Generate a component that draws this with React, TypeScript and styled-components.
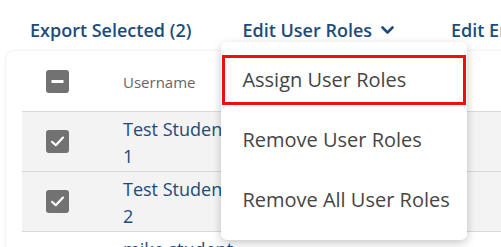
import React from "react";
import styled, { createGlobalStyle, css } from "styled-components";

const GlobalStyle = createGlobalStyle`
  body {
    margin: 0;
    background: #ffffff;
    font-family: "Open Sans", "Liberation Sans", sans-serif;
    overflow: hidden;
  }
`;

const Page = styled.div`
  padding: 18px 0 0 6px;
  width: 501px;
  height: 247px;
  box-sizing: border-box;
  overflow: hidden;
`;

const Toolbar = styled.div`
  display: flex;
  align-items: center;
  gap: 51px;
  padding-left: 24px;
  height: 24px;
  white-space: nowrap;
`;

const ToolButton = styled.div`
  position: relative;
  display: flex;
  align-items: center;
  font-size: 18px;
  font-weight: 600;
  line-height: 24px;
  color: #1d4c7c;

  svg {
    margin-left: 9px;
    margin-right: 6px;
  }
`;

const Menu = styled.div`
  position: absolute;
  top: 24px;
  left: -21px;
  width: 246px;
  padding: 8px 0 10px;
  background: #ffffff;
  border-radius: 6px;
  box-shadow: 0 3px 10px rgba(0, 0, 0, 0.22);
  z-index: 10;
`;

const MenuItem = styled.div<{ focused?: boolean }>`
  position: relative;
  height: 60px;
  display: flex;
  align-items: center;
  padding-left: 21px;
  font-size: 20px;
  font-weight: 400;
  color: #454545;

  ${({ focused }) =>
    focused &&
    css`
      &::after {
        content: "";
        position: absolute;
        inset: 5px 1px;
        border: 3px solid #f20d0d;
      }
    `}
`;

const Card = styled.div`
  margin-top: 9px;
  width: 540px;
  height: 220px;
  padding-left: 16px;
  background: #ffffff;
  border-radius: 8px;
  box-shadow: 0 0 3px rgba(0, 0, 0, 0.12);
`;

const Row = styled.div<{ header?: boolean; shaded?: boolean }>`
  display: grid;
  grid-template-columns: 71px 112px 1fr;
  column-gap: 30px;
  border-bottom: 1px solid #d9d9d9;
  background: ${({ shaded }) => (shaded ? "#f3f3f3" : "#ffffff")};
  ${({ header }) =>
    header
      ? css`
          height: 60px;
          align-items: center;
        `
      : css`
          height: 59px;
          align-items: start;
        `}
`;

const CheckCell = styled.div`
  display: flex;
  justify-content: center;
  align-self: center;
`;

const HeaderLabel = styled.div`
  font-size: 15px;
  color: #666666;
  padding-top: 2px;
`;

const NameCell = styled.div`
  padding-top: 4px;
  font-size: 18px;
  line-height: 27px;
  color: #1b4a7b;
`;

const Box = styled.div`
  width: 23px;
  height: 23px;
  border-radius: 3px;
  background: #727272;
  display: flex;
  align-items: center;
  justify-content: center;
`;

const Chevron = () => (
  <svg width="13" height="9" viewBox="0 0 13 9">
    <path
      d="M1.5 1.5 L6.5 6.5 L11.5 1.5"
      fill="none"
      stroke="#1d4c7c"
      strokeWidth="2.6"
      strokeLinecap="round"
      strokeLinejoin="round"
    />
  </svg>
);

const Checkbox = ({ mixed }: { mixed?: boolean }) => (
  <Box>
    {mixed ? (
      <svg width="15" height="15" viewBox="0 0 15 15">
        <rect x="1.5" y="6" width="12" height="3" fill="#ffffff" />
      </svg>
    ) : (
      <svg width="15" height="15" viewBox="0 0 15 15">
        <path
          d="M2 7.8 L5.8 11.2 L13 3.6"
          fill="none"
          stroke="#ffffff"
          strokeWidth="2.2"
          strokeLinecap="round"
          strokeLinejoin="round"
        />
      </svg>
    )}
  </Box>
);

const students = [
  { name: "Test Student 1", checked: true },
  { name: "Test Student 2", checked: true },
  { name: "mike student 3", checked: false },
];

export default function App() {
  return (
    <>
      <GlobalStyle />
      <Page>
        <Toolbar>
          <ToolButton>Export Selected (2)</ToolButton>
          <ToolButton>
            Edit User Roles
            <Chevron />
            <Menu>
              <MenuItem focused>Assign User Roles</MenuItem>
              <MenuItem>Remove User Roles</MenuItem>
              <MenuItem>Remove All User Roles</MenuItem>
            </Menu>
          </ToolButton>
          <ToolButton>Edit Enrollment</ToolButton>
        </Toolbar>
        <Card>
          <Row header>
            <CheckCell>
              <Checkbox mixed />
            </CheckCell>
            <HeaderLabel>Username</HeaderLabel>
          </Row>
          {students.map((s) => (
            <Row key={s.name} shaded={s.checked}>
              <CheckCell>{s.checked ? <Checkbox /> : <Box />}</CheckCell>
              <NameCell>{s.name}</NameCell>
            </Row>
          ))}
        </Card>
      </Page>
    </>
  );
}
